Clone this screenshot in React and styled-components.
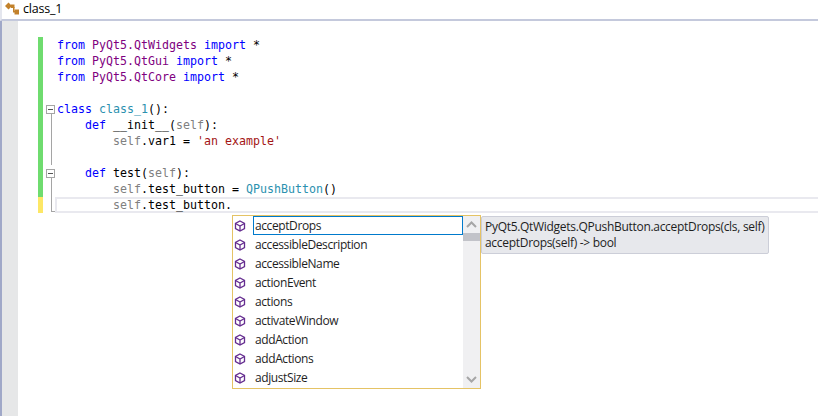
import React from "react";
import styled, {createGlobalStyle} from "styled-components";

const Global = createGlobalStyle`
  html, body {
    margin: 0;
    padding: 0;
    background: #fff;
  }
  #root {
    width: 818px;
    height: 416px;
    overflow: hidden;
  }
`

const Page = styled.div`
  position: relative;
  width: 818px;
  height: 416px;
  display: flex;
  flex-direction: column;
  background: #fff;
  overflow: hidden;
`

const TabBar = styled.div`
  height: 21px;
  flex: none;
  display: flex;
  align-items: center;
  gap: 4px;
  padding: 0 0 2px 3px;
  background: #fff;
  border-left: 2px solid #e4e6ee;
  border-bottom: 2px solid #c4c9dc;
  box-sizing: border-box;
  font-family: "Open Sans", sans-serif;
  font-size: 12.5px;
  letter-spacing: -0.2px;
  color: #000;
`

const Editor = styled.div`
  flex: 1;
  display: flex;
  border-left: 2px solid #a0a8c8;
`

const Margin = styled.div`
  width: 16px;
  flex: none;
  background: #e6e7e8;
`

const Gutter = styled.div`
  padding: 16px 0 0 20px;
  display: flex;
`

const ChangeBars = styled.div`
  width: 5px;
  display: flex;
  flex-direction: column;
`

const ChangeBar = styled.div`
  width: 5px;
  height: ${p => p.$lines * 16}px;
  background: ${p => p.$color};
`

const FoldColumn = styled.div`
  width: 9px;
  margin-left: 3px;
  display: flex;
  flex-direction: column;
`

const FoldCell = styled.div`
  position: relative;
  height: 16px;
  width: 9px;
  &::before {
    content: "";
    position: absolute;
    left: 5px;
    top: ${p => (p.$kind === "box" ? 8 : 0)}px;
    bottom: ${p => (p.$kind === "end" ? 1 : 0)}px;
    border-left: 1px solid #a5a5a5;
    display: ${p => (p.$kind === "none" ? "none" : "block")};
  }
  &::after {
    content: "";
    position: absolute;
    display: ${p => (p.$kind === "end" ? "block" : "none")};
    left: 5px;
    bottom: 1px;
    width: 4px;
    border-bottom: 1px solid #a5a5a5;
  }
`

const FoldBox = styled.span`
  position: absolute;
  z-index: 1;
  left: 0;
  top: 4px;
  width: 9px;
  height: 9px;
  box-sizing: border-box;
  background: #fff;
  border: 1px solid #a5a5a5;
  &::after {
    content: "";
    position: absolute;
    left: 1px;
    right: 1px;
    top: 3px;
    border-top: 1px solid #555;
  }
`

const Code = styled.div`
  flex: 1;
  padding-top: 16px;
  font-family: "DejaVu Sans Mono", monospace;
  font-size: 11.63px;
  color: #000;
`

const Line = styled.div`
  height: 16px;
  line-height: 16px;
  padding-left: ${p => (p.$current ? 0 : 2)}px;
  white-space: pre;
  box-sizing: border-box;
  ${p => p.$current && `
    border: 2px solid #e9e9ef;
    border-right: none;
    line-height: 12px;
  `}
`

const Tok = styled.span`
  color: ${p => p.$c};
`

const Overlay = styled.div`
  position: absolute;
  left: 232px;
  top: 215px;
  display: flex;
  align-items: flex-start;
`

const Popup = styled.div`
  width: 249px;
  height: 174px;
  box-sizing: border-box;
  border: 1px solid #e5c365;
  background: #fff;
  display: flex;
`

const Rows = styled.div`
  flex: 1;
  display: flex;
  flex-direction: column;
`

const Row = styled.div`
  height: 19px;
  display: flex;
  align-items: center;
  font-family: "Open Sans", sans-serif;
  font-size: 12px;
  letter-spacing: -0.4px;
  color: #1e1e1e;
`

const IconSlot = styled.div`
  width: 20px;
  flex: none;
  padding-right: 7px;
  box-sizing: border-box;
  display: flex;
  justify-content: center;
`

const RowLabel = styled.div`
  flex: 1;
  height: 19px;
  line-height: 17px;
  padding-left: 1px;
  box-sizing: border-box;
  border: 1px solid ${p => (p.$selected ? "#007acc" : "transparent")};
`

const Scrollbar = styled.div`
  width: 17px;
  flex: none;
  background: #f0f0f2;
  display: flex;
  flex-direction: column;
  align-items: center;
`

const Arrow = styled.div`
  height: 17px;
  display: flex;
  align-items: center;
  justify-content: center;
  flex: none;
`

const Track = styled.div`
  flex: 1;
  width: 100%;
`

const Thumb = styled.div`
  width: 100%;
  height: 8px;
  background: #c2c3c9;
`

const Tip = styled.div`
  width: 288px;
  height: 38px;
  margin-top: 1px;
  box-sizing: border-box;
  padding: 2px 3px;
  background: #e7e8ec;
  border: 1px solid #ccced8;
  border-radius: 2px;
  font-family: "Open Sans", sans-serif;
  font-size: 12px;
  letter-spacing: -0.3px;
  line-height: 16px;
  color: #1e1e1e;
  white-space: pre;
`

const K = "#0000ff", M = "#800080", C = "#2b91af", S = "#808080", R = "#a31515", D = "#000000"

const code = [
	[["from", K], [" "], ["PyQt5.QtWidgets", M], [" "], ["import", K], [" *"]],
	[["from", K], [" "], ["PyQt5.QtGui", M], [" "], ["import", K], [" *"]],
	[["from", K], [" "], ["PyQt5.QtCore", M], [" "], ["import", K], [" *"]],
	[],
	[["class", K], [" "], ["class_1", C], ["():"]],
	[["    "], ["def", K], [" __init__("], ["self", S], ["):"]],
	[["        "], ["self", S], [".var1 = "], ["'an example'", R]],
	[],
	[["    "], ["def", K], [" test("], ["self", S], ["):"]],
	[["        "], ["self", S], [".test_button = "], ["QPushButton", C], ["()"]],
	[["        "], ["self", S], [".test_button."]],
]

const folds = ["none", "none", "none", "none", "box", "line", "line", "line", "box", "line", "end"]

const members = [
	"acceptDrops", "accessibleDescription", "accessibleName", "actionEvent", "actions",
	"activateWindow", "addAction", "addActions", "adjustSize",
]

function ClassIcon() {
	return (
		<svg width="12" height="12" viewBox="0 0 12 12" fill="none" stroke="#652d90" strokeWidth="1.3">
			<path d="M6 1 L10.5 3.5 V8.5 L6 11 L1.5 8.5 V3.5 Z"/>
			<path d="M1.5 3.5 L6 6 L10.5 3.5 M6 6 V11"/>
		</svg>
	)
}

function FileIcon() {
	return (
		<svg width="14" height="14" viewBox="0 0 14 14" fill="#c2812b">
			<path d="M0 4 L3.5 0.5 L7 4 L3.5 7.5 Z"/>
			<path d="M6 2.5 H9.5 V6 H6 Z"/>
			<path d="M8 5 H9.5 V9 H10.5 V10.5 H8 Z"/>
			<path d="M9.5 7.5 H14 V12.5 H9.5 Z"/>
		</svg>
	)
}

function App() {
	return (
		<Page>
			<Global/>
			<TabBar>
				<FileIcon/>
				<span>class_1</span>
			</TabBar>
			<Editor>
				<Margin/>
				<Gutter>
					<ChangeBars>
						<ChangeBar $lines={10} $color={'#6fdc6f'}/>
						<ChangeBar $lines={1} $color={'#fde766'}/>
					</ChangeBars>
					<FoldColumn>
						{folds.map((kind, i) => (
							<FoldCell key={i} $kind={kind}>{kind === 'box' && <FoldBox/>}</FoldCell>
						))}
					</FoldColumn>
				</Gutter>
				<Code>
					{code.map((tokens, i) => (
						<Line key={i} $current={i === code.length - 1}>
							{tokens.map(([text, color], j) => <Tok key={j} $c={color || D}>{text}</Tok>)}
						</Line>
					))}
				</Code>
			</Editor>
			<Overlay>
				<Popup>
					<Rows>
						{members.map((name, i) => (
							<Row key={name}>
								<IconSlot><ClassIcon/></IconSlot>
								<RowLabel $selected={i === 0}>{name}</RowLabel>
							</Row>
						))}
					</Rows>
					<Scrollbar>
						<Arrow>
							<svg width="11" height="7" viewBox="0 0 11 7" fill="none" stroke="#a6a6a6" strokeWidth="2">
								<path d="M1 6 L5.5 1.5 L10 6"/>
							</svg>
						</Arrow>
						<Thumb/>
						<Track/>
						<Arrow>
							<svg width="11" height="7" viewBox="0 0 11 7" fill="none" stroke="#a6a6a6" strokeWidth="2">
								<path d="M1 1 L5.5 5.5 L10 1"/>
							</svg>
						</Arrow>
					</Scrollbar>
				</Popup>
				<Tip>{'PyQt5.QtWidgets.QPushButton.acceptDrops(cls, self)\nacceptDrops(self) -> bool'}</Tip>
			</Overlay>
		</Page>
	)
}

export default App
